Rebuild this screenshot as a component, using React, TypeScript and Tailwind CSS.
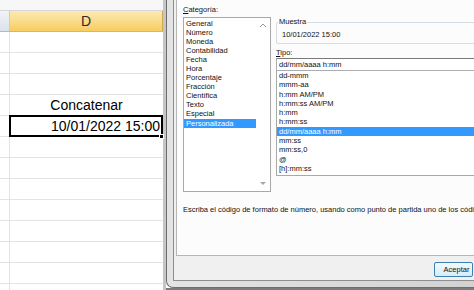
const categorias = [
  "General",
  "Número",
  "Moneda",
  "Contabilidad",
  "Fecha",
  "Hora",
  "Porcentaje",
  "Fracción",
  "Científica",
  "Texto",
  "Especial",
  "Personalizada",
];

const tipos = [
  "dd-mmm",
  "mmm-aa",
  "h:mm AM/PM",
  "h:mm:ss AM/PM",
  "h:mm",
  "h:mm:ss",
  "dd/mm/aaaa h:mm",
  "mm:ss",
  "mm:ss,0",
  "@",
  "[h]:mm:ss",
];

const font = { fontFamily: '"Liberation Sans", Arial, sans-serif' };

export default function App() {
  return (
    <div
      className="flex h-[290px] w-[474px] overflow-hidden bg-white text-black"
      style={font}
    >
      <Sheet />
      <FormatDialog />
    </div>
  );
}

function Sheet() {
  const rows = Array.from({ length: 13 }, (_, i) => i);
  return (
    <div className="flex w-[166px] shrink-0 flex-col border-r-[3px] border-[#c6c6c6]">
      <div className="h-[11px] shrink-0 border-b border-[#d6d6d6] bg-[#f7f7f7]" />
      <div className="flex h-[21px] shrink-0 border-b border-[#d7b76a]">
        <div className="w-[10px] border-r border-[#c5ccd6] bg-gradient-to-b from-[#f1f4f8] to-[#dce2ea]" />
        <div className="flex flex-1 items-center justify-center border-r border-[#c9a955] bg-gradient-to-b from-[#fdeab0] to-[#f7cd60] text-[14px] text-[#2b2b2b]">
          D
        </div>
      </div>
      {rows.map((i) => (
        <div key={i} className="flex h-[21px] shrink-0 border-b border-[#e3e3e3]">
          <div className="w-[10px] border-r border-[#e3e3e3]" />
          <div className="relative flex flex-1 items-center text-[14px]">
            {i === 3 && <span className="w-full pt-[1px] text-center">Concatenar</span>}
            {i === 4 && (
              <>
                <span className="w-full pr-[3px] pt-[1px] text-right">10/01/2022 15:00</span>
                <div className="absolute -top-[1px] -bottom-[1px] -left-[1px] right-0 border-2 border-black" />
                <div className="absolute -bottom-[3px] -right-[1px] h-[5px] w-[5px] border border-white bg-black" />
              </>
            )}
          </div>
        </div>
      ))}
    </div>
  );
}

function FormatDialog() {
  return (
    <div className="flex min-w-0 flex-1 flex-col">
      <div className="h-[288px] shrink-0 rounded-bl-[7px] border-b border-l border-[#6e6e6e] bg-gradient-to-r from-[#e4e4e4] to-[#d2d2d2] pb-[6px] pl-[6px]">
        <div className="flex h-full flex-col overflow-hidden border-b border-l border-[#8e8e8e] bg-[#f0f0f0] text-[7.5px] text-[#111]">
          <div className="ml-[2px] h-[256px] shrink-0 overflow-hidden border-b border-l border-[#b6b6b6] bg-[#fcfcfc] pl-[6px] pt-[5px]">
            <div className="flex gap-[5px]">
              <div className="w-[88px] shrink-0">
                <div className="h-[12px] leading-[10px]">
                  <span className="underline">C</span>ategoría:
                </div>
                <CategoryList />
              </div>
              <div className="w-[230px] shrink-0 pt-[17px]">
                <div className="relative h-[22px] rounded-[2px] border border-[#d5dde3] pl-[5px] pt-[7px] leading-[10px]">
                  <span className="absolute -top-[6px] left-[1px] bg-[#fcfcfc] px-[1px] leading-[10px]">
                    Muestra
                  </span>
                  10/01/2022 15:00
                </div>
                <div className="mt-[4px] h-[10px] leading-[10px]">
                  <span className="underline">T</span>ipo:
                </div>
                <div className="h-[13px] border border-[#abadb3] border-t-[#7a7a7a] bg-white pl-[2px] leading-[11px]">
                  dd/mm/aaaa h:mm
                </div>
                <div className="h-[105px] border border-t-0 border-[#a9a9a9] bg-white">
                  {tipos.map((t) => (
                    <div
                      key={t}
                      className={
                        t === "dd/mm/aaaa h:mm"
                          ? "h-[9.3px] bg-[#3399ff] pl-[2px] leading-[9.3px] text-white"
                          : "h-[9.3px] pl-[2px] leading-[9.3px]"
                      }
                    >
                      {t}
                    </div>
                  ))}
                </div>
              </div>
            </div>
            <p className="mt-[13px] whitespace-nowrap leading-[10px]">
              Escriba el código de formato de número, usando como punto de partida uno de los códigos existentes.
            </p>
          </div>
          <div className="flex pl-[260px] pt-[6px]">
            <div className="flex h-[15px] w-[39px] shrink-0 items-center justify-center rounded-[2px] border border-[#3c7fb1] bg-gradient-to-b from-[#f2f9fd] to-[#d6ecf8] pl-[6px]">
              Aceptar
            </div>
          </div>
        </div>
      </div>
      <div className="h-[2px] bg-[#7b7b7b]" />
    </div>
  );
}

function CategoryList() {
  return (
    <div className="flex h-[175px] border border-[#a9a9a9] bg-white">
      <div className="min-w-0 flex-1 pt-[0.5px]">
        {categorias.map((c) => (
          <div
            key={c}
            className={
              c === "Personalizada"
                ? "h-[9.1px] bg-[#3399ff] pl-[2px] leading-[9.1px] text-white"
                : "h-[9.1px] pl-[2px] leading-[9.1px]"
            }
          >
            {c}
          </div>
        ))}
      </div>
      <div className="flex w-[14px] flex-col items-center justify-between py-[5px]">
        <svg width="6" height="4" viewBox="0 0 6 4">
          <path d="M0 4 L3 1 L6 4" fill="none" stroke="#9a9a9a" strokeWidth="1" />
        </svg>
        <svg width="6" height="4" viewBox="0 0 6 4">
          <path d="M0 0 L6 0 L3 3 Z" fill="#a8a8a8" />
        </svg>
      </div>
    </div>
  );
}
